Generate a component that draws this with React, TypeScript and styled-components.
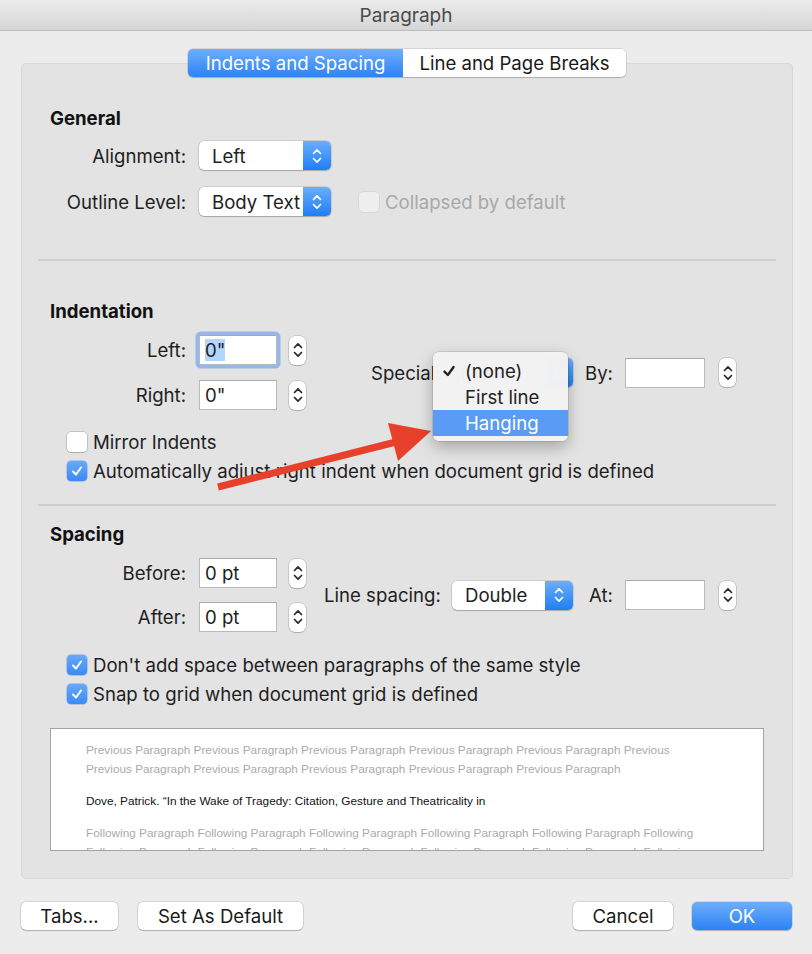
import React from "react";
import styled, { createGlobalStyle } from "styled-components";

const FONT = "18.6px";

const GlobalStyle = createGlobalStyle`
  html, body {
    margin: 0;
    padding: 0;
    background: #ececec;
  }
  body {
    font-family: Inter, "Liberation Sans", sans-serif;
    color: #1e1e1e;
  }
`;

const Window = styled.div`
  position: relative;
  width: 812px;
  height: 954px;
  overflow: hidden;
  background: #ececec;
  display: flex;
  flex-direction: column;
`;

const TitleBar = styled.div`
  height: 30px;
  flex-shrink: 0;
  border-bottom: 1px solid #bdbdbd;
  background: linear-gradient(#ebebeb, #d6d6d6);
  display: flex;
  align-items: center;
  justify-content: center;
  font-size: 19px;
  color: #4a4a4a;
`;

const Content = styled.div`
  padding: 18px 19px 0 21px;
  display: flex;
  flex-direction: column;
`;

const TabRow = styled.div`
  display: flex;
  justify-content: center;
  margin-bottom: -14px;
  position: relative;
  z-index: 1;
`;

const Segmented = styled.div`
  display: flex;
  border-radius: 5px;
  overflow: hidden;
  box-shadow: 0 0 0 0.5px rgba(0, 0, 0, 0.2), 0 1px 1px rgba(0, 0, 0, 0.15);
`;

const Tab = styled.div<{ $active?: boolean; $width: number }>`
  width: ${(p) => p.$width}px;
  height: 28px;
  display: flex;
  align-items: center;
  justify-content: center;
  font-size: ${FONT};
  background: ${(p) => (p.$active ? "linear-gradient(#6eaefa, #2c82f6)" : "#fff")};
  color: ${(p) => (p.$active ? "#fff" : "#1a1a1a")};
`;

const Panel = styled.div`
  background: #e3e3e3;
  border: 1px solid #d8d8d8;
  border-radius: 5px;
  padding: 42px 0 27px;
  display: flex;
  flex-direction: column;
`;

const Section = styled.div`
  padding: 0 28px;
  display: flex;
  flex-direction: column;
`;

const Heading = styled.div<{ $top?: number }>`
  margin-top: ${(p) => p.$top ?? 0}px;
  font-size: ${FONT};
  font-weight: 700;
  line-height: 24px;
  color: #111;
`;

const Separator = styled.div<{ $top: number }>`
  margin: ${(p) => p.$top}px 16px 0;
  height: 2px;
  background: #cecece;
`;

const Row = styled.div<{ $top: number }>`
  display: flex;
  align-items: center;
  margin-top: ${(p) => p.$top}px;
`;

const FieldColumn = styled.div`
  display: flex;
  flex-direction: column;
`;

const FieldLabel = styled.span`
  width: 136px;
  margin-right: 13px;
  text-align: right;
  font-size: ${FONT};
  white-space: nowrap;
`;

const SideLabel = styled.span<{ $left: number; $width: number }>`
  margin-left: ${(p) => p.$left}px;
  width: ${(p) => p.$width}px;
  font-size: ${FONT};
  white-space: nowrap;
`;

const TextInput = styled.div<{ $width: number; $focused?: boolean }>`
  box-sizing: border-box;
  width: ${(p) => p.$width}px;
  height: 30px;
  background: #fff;
  border: 1px solid #b9b9b9;
  border-top-color: #a9a9a9;
  display: flex;
  align-items: center;
  padding-left: 5px;
  font-size: ${FONT};
  box-shadow: ${(p) => (p.$focused ? "0 0 0 3.5px rgba(110, 160, 238, 0.65)" : "none")};
  border-radius: ${(p) => (p.$focused ? "2px" : "0")};
`;

const Selected = styled.span`
  background: #b4d5fe;
`;

const StepperBox = styled.div<{ $left: number }>`
  margin-left: ${(p) => p.$left}px;
  width: 17px;
  height: 29px;
  border-radius: 6px;
  background: #fff;
  box-shadow: 0 0 0 0.5px rgba(0, 0, 0, 0.22), 0 1px 1px rgba(0, 0, 0, 0.15);
  display: flex;
  align-items: center;
  justify-content: center;
`;

const PopupWrap = styled.div`
  position: relative;
`;

const PopupBox = styled.div<{ $width: number }>`
  width: ${(p) => p.$width}px;
  height: 29px;
  display: flex;
  background: #fff;
  border-radius: 5px;
  overflow: hidden;
  box-shadow: 0 0 0 0.5px rgba(0, 0, 0, 0.2), 0 1px 1px rgba(0, 0, 0, 0.18);
`;

const PopupValue = styled.span`
  flex: 1;
  display: flex;
  align-items: center;
  padding-left: 13px;
  font-size: ${FONT};
  white-space: nowrap;
`;

const PopupArrow = styled.span`
  width: 28px;
  display: flex;
  align-items: center;
  justify-content: center;
  background: linear-gradient(#6aaefb, #1f7ef6);
`;

const Menu = styled.div`
  position: absolute;
  left: -14px;
  top: -6px;
  width: 135px;
  padding: 6px 0 5px;
  background: rgba(242, 242, 242, 0.98);
  border-radius: 6px;
  box-shadow: 0 0 0 0.5px rgba(0, 0, 0, 0.18), 0 6px 16px rgba(0, 0, 0, 0.28);
  z-index: 3;
`;

const MenuItem = styled.div<{ $active?: boolean }>`
  position: relative;
  height: 26px;
  display: flex;
  align-items: center;
  padding-left: 32px;
  font-size: ${FONT};
  background: ${(p) => (p.$active ? "#5a9bf5" : "transparent")};
  color: ${(p) => (p.$active ? "#fff" : "#222")};
`;

const Check = styled.span`
  position: absolute;
  left: 8px;
  top: 5px;
  display: flex;
`;

const CheckRow = styled.label<{ $top: number; $indent?: number }>`
  display: flex;
  align-items: center;
  height: 20px;
  gap: 6px;
  margin-top: ${(p) => p.$top}px;
  margin-left: ${(p) => p.$indent ?? 17}px;
  font-size: ${FONT};
  white-space: nowrap;
`;

const Box = styled.span<{ $checked?: boolean; $disabled?: boolean }>`
  box-sizing: border-box;
  width: 20px;
  height: 20px;
  flex-shrink: 0;
  border-radius: 4px;
  display: flex;
  align-items: center;
  justify-content: center;
  background: ${(p) =>
    p.$checked ? "linear-gradient(#68a9f9, #3a8bf6)" : p.$disabled ? "#eeeeee" : "#fff"};
  box-shadow: ${(p) =>
    p.$checked
      ? "0 0 0 0.5px rgba(30, 100, 220, 0.5)"
      : p.$disabled
      ? "0 0 0 0.5px rgba(0, 0, 0, 0.1)"
      : "0 0 0 0.5px rgba(0, 0, 0, 0.28), 0 1px 1px rgba(0, 0, 0, 0.12)"};
`;

const DimText = styled.span`
  color: #a8a8a8;
`;

const Preview = styled.div`
  margin-top: 24px;
  height: 123px;
  box-sizing: border-box;
  background: #fff;
  border: 1.5px solid #a3a3a3;
  padding: 12px 0 0 35px;
  overflow: hidden;
  font-family: "Liberation Sans", Arial, sans-serif;
  font-size: 11.8px;
`;

const PreviewLine = styled.div<{ $dim?: boolean; $top?: number }>`
  line-height: 19px;
  white-space: nowrap;
  margin-top: ${(p) => p.$top ?? 0}px;
  color: ${(p) => (p.$dim ? "#aaaaaa" : "#111")};
`;

const Footer = styled.div`
  margin-top: 23px;
  display: flex;
  justify-content: space-between;
  padding-right: 1px;
`;

const ButtonGroup = styled.div<{ $gap: number }>`
  display: flex;
  gap: ${(p) => p.$gap}px;
`;

const Button = styled.button<{ $width: number; $primary?: boolean }>`
  width: ${(p) => p.$width}px;
  height: 28px;
  border: none;
  border-radius: 5px;
  font-family: inherit;
  font-size: ${FONT};
  padding: 0;
  color: ${(p) => (p.$primary ? "#fff" : "#1a1a1a")};
  background: ${(p) => (p.$primary ? "linear-gradient(#6eaefa, #2c82f6)" : "#fff")};
  box-shadow: 0 0 0 0.5px rgba(0, 0, 0, 0.2), 0 1px 1px rgba(0, 0, 0, 0.18);
`;

const ArrowOverlay = styled.svg`
  position: absolute;
  left: 0;
  top: 0;
  pointer-events: none;
  z-index: 2;
`;

const Chevrons: React.FC<{ color: string }> = ({ color }) => (
  <svg width="12" height="22" viewBox="0 0 12 22" fill="none" stroke={color} strokeWidth="1.7" strokeLinecap="round" strokeLinejoin="round">
    <path d="M2.5 8.5 L6 4.8 L9.5 8.5" />
    <path d="M2.5 13.5 L6 17.2 L9.5 13.5" />
  </svg>
);

const CheckMark: React.FC<{ color?: string; size?: number }> = ({ color = "#fff", size = 14 }) => (
  <svg width={size} height={size} viewBox="0 0 14 14" fill="none" stroke={color} strokeWidth="2" strokeLinecap="round" strokeLinejoin="round">
    <path d="M3 7.5 L6 10.5 L11 3.5" />
  </svg>
);

const Popup: React.FC<{ width: number; value: string; children?: React.ReactNode }> = ({ width, value, children }) => (
  <PopupWrap>
    <PopupBox $width={width}>
      <PopupValue>{value}</PopupValue>
      <PopupArrow>
        <Chevrons color="#fff" />
      </PopupArrow>
    </PopupBox>
    {children}
  </PopupWrap>
);

const Stepper: React.FC<{ left?: number }> = ({ left = 12 }) => (
  <StepperBox $left={left}>
    <Chevrons color="#2a2a2a" />
  </StepperBox>
);

const Checkbox: React.FC<{ checked?: boolean; disabled?: boolean }> = ({ checked, disabled }) => (
  <Box $checked={checked} $disabled={disabled}>
    {checked && <CheckMark />}
  </Box>
);

const prev = "Previous Paragraph ";
const follow = "Following Paragraph ";

const App: React.FC = () => {
  return (
    <Window>
      <GlobalStyle />
      <TitleBar>Paragraph</TitleBar>
      <Content>
        <TabRow>
          <Segmented>
            <Tab $active $width={215}>Indents and Spacing</Tab>
            <Tab $width={223}>Line and Page Breaks</Tab>
          </Segmented>
        </TabRow>
        <Panel>
          {/* General */}
          <Section>
            <Heading>General</Heading>
            <Row $top={11}>
              <FieldLabel>Alignment:</FieldLabel>
              <Popup width={132} value="Left" />
            </Row>
            <Row $top={17}>
              <FieldLabel>Outline Level:</FieldLabel>
              <Popup width={132} value="Body Text" />
              <CheckRow $top={0} $indent={28}>
                <Checkbox disabled />
                <DimText>Collapsed by default</DimText>
              </CheckRow>
            </Row>
          </Section>

          <Separator $top={43} />

          {/* Indentation */}
          <Section>
            <Heading $top={38}>Indentation</Heading>
            <Row $top={12}>
              <FieldColumn>
                <Row $top={0}>
                  <FieldLabel>Left:</FieldLabel>
                  <TextInput $width={78} $focused>
                    <Selected>0"</Selected>
                  </TextInput>
                  <Stepper />
                </Row>
                <Row $top={15}>
                  <FieldLabel>Right:</FieldLabel>
                  <TextInput $width={78}>0"</TextInput>
                  <Stepper />
                </Row>
              </FieldColumn>
              <SideLabel $left={65} $width={76}>Special:</SideLabel>
              <Popup width={126} value="(none)">
                <Menu>
                  <MenuItem>
                    <Check>
                      <CheckMark color="#222" size={16} />
                    </Check>
                    (none)
                  </MenuItem>
                  <MenuItem>First line</MenuItem>
                  <MenuItem $active>Hanging</MenuItem>
                </Menu>
              </Popup>
              <SideLabel $left={12} $width={40}>By:</SideLabel>
              <TextInput $width={80} />
              <Stepper left={14} />
            </Row>
            <CheckRow $top={22}>
              <Checkbox />
              Mirror Indents
            </CheckRow>
            <CheckRow $top={9}>
              <Checkbox checked />
              Automatically adjust right indent when document grid is defined
            </CheckRow>
          </Section>

          <Separator $top={23} />

          {/* Spacing */}
          <Section>
            <Heading $top={16}>Spacing</Heading>
            <Row $top={12}>
              <FieldColumn>
                <Row $top={0}>
                  <FieldLabel>Before:</FieldLabel>
                  <TextInput $width={78}>0 pt</TextInput>
                  <Stepper />
                </Row>
                <Row $top={14}>
                  <FieldLabel>After:</FieldLabel>
                  <TextInput $width={78}>0 pt</TextInput>
                  <Stepper />
                </Row>
              </FieldColumn>
              <SideLabel $left={18} $width={128}>Line spacing:</SideLabel>
              <Popup width={121} value="Double" />
              <SideLabel $left={16} $width={36}>At:</SideLabel>
              <TextInput $width={80} />
              <Stepper left={14} />
            </Row>
            <CheckRow $top={23}>
              <Checkbox checked />
              Don't add space between paragraphs of the same style
            </CheckRow>
            <CheckRow $top={9}>
              <Checkbox checked />
              Snap to grid when document grid is defined
            </CheckRow>

            <Preview>
              <PreviewLine $dim>{prev.repeat(5)}Previous</PreviewLine>
              <PreviewLine $dim>{prev.repeat(4)}Previous Paragraph</PreviewLine>
              <PreviewLine $top={13}>
                Dove, Patrick. “In the Wake of Tragedy: Citation, Gesture and Theatricality in
              </PreviewLine>
              <PreviewLine $dim $top={13}>{follow.repeat(5)}Following</PreviewLine>
              <PreviewLine $dim>{follow.repeat(5)}Following</PreviewLine>
            </Preview>
          </Section>
        </Panel>

        <Footer>
          <ButtonGroup $gap={20}>
            <Button $width={97}>Tabs...</Button>
            <Button $width={165}>Set As Default</Button>
          </ButtonGroup>
          <ButtonGroup $gap={19}>
            <Button $width={100}>Cancel</Button>
            <Button $width={100} $primary>
              OK
            </Button>
          </ButtonGroup>
        </Footer>
      </Content>

      <ArrowOverlay width="812" height="954" viewBox="0 0 812 954">
        <line x1="218" y1="487" x2="396" y2="442" stroke="#e8412b" strokeWidth="7" />
        <polygon points="388,423 431,431 398,461" fill="#e8412b" />
      </ArrowOverlay>
    </Window>
  );
};

export default App;
